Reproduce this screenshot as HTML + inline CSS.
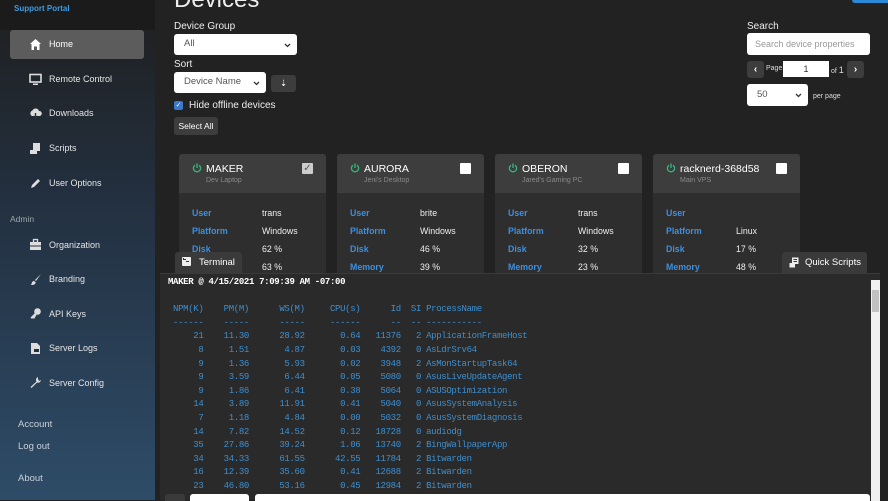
<!DOCTYPE html>
<html><head><meta charset="utf-8">
<style>
*{box-sizing:border-box;margin:0;padding:0}
html,body{width:888px;height:500px;overflow:hidden;background:#222;font-family:"Liberation Sans",sans-serif;color:#fff}
.sb{position:absolute;left:0;top:0;width:155px;height:500px;background:linear-gradient(180deg,#1f1f1f 0%,#233040 40%,#2e4c68 100%)}
.sbh{position:absolute;left:0;top:0;width:155px;height:30px;background:#1b1b1b}
.sbh span{position:absolute;left:14px;top:4px;font-size:8px;color:#3d9ae3;font-weight:bold}
.nav{position:absolute;left:49px;font-size:9px;color:#e6e6e6}
.ico{position:absolute;left:29px;width:13px;height:13px}
.act{position:absolute;left:10px;top:30px;width:134px;height:29px;background:#5c5c5c;border-radius:3px}
.lnk{position:absolute;font-size:9.5px;color:#c8d0d8}
.main{position:absolute;left:155px;top:0;width:733px;height:500px}
.a{position:absolute}
.lbl{font-size:10px;color:#eee}
.sel{background:#fff;border-radius:3px;color:#555;font-size:9.5px;padding-left:10px;line-height:20px}
.chev{position:absolute;right:6px;top:50%;margin-top:-2px;width:7px;height:5px}
.btn{background:#3d3d3d;border-radius:3px;font-size:8.5px;color:#fff;text-align:center}
.card{position:absolute;top:154px;width:147px;height:130px;background:#2e2e2e;border-radius:3px;overflow:hidden}
.ch{height:39px;background:#3d3d3d;position:relative}
.ch .pw{position:absolute;left:13px;top:9px;width:10px;height:10px}
.ch .nm{position:absolute;left:27px;top:9px;font-size:10.5px;color:#fff}
.ch .sub{position:absolute;left:27px;top:23px;font-size:7px;color:#8a8a8a}
.ch .cb{position:absolute;right:13px;top:9px;width:11px;height:11px;background:#fff;border-radius:1px}
.row{position:absolute;left:13px;font-size:8.8px;color:#3d8fe0;font-weight:bold}
.val{position:absolute;left:83px;font-size:8.8px;color:#eee}
.term{position:absolute;left:160px;top:273px;width:720px;height:227px;background:#2a2a2a;border-top:1px solid #3a3a3a}
pre{position:absolute;left:8px;top:2px;font-family:"Liberation Mono",monospace;font-size:9px;letter-spacing:-0.34px;line-height:13.6px;color:#3d8fd0}
pre b{color:#fff}
.tab{position:absolute;background:#3a3a3a;border-radius:3px 3px 0 0;font-size:9.5px;color:#fff}
</style></head><body>
<div class="sb">
 <div class="sbh"><span>Support Portal</span></div>
 <div class="act"></div>
 <svg class="ico" style="top:38px" viewBox="0 0 13 13"><path d="M6.5 1 L12 6 H10.5 V12 H8 V8.5 H5 V12 H2.5 V6 H1Z" fill="#fff"/></svg>
 <div class="nav" style="top:39px;color:#fff">Home</div>
 <svg class="ico" style="top:73px" viewBox="0 0 13 13"><rect x="1" y="1.5" width="11" height="7.5" fill="none" stroke="#ddd" stroke-width="1.6"/><rect x="4" y="10.5" width="5" height="1.5" fill="#ddd"/></svg>
 <div class="nav" style="top:74px">Remote Control</div>
 <svg class="ico" style="top:107px" viewBox="0 0 13 13"><path d="M3 9 A3 3 0 0 1 3.5 3.5 A3.5 3.5 0 0 1 10 4 A2.5 2.5 0 0 1 10.5 9Z" fill="#ddd"/><path d="M6.5 6 V11 M4.5 9 L6.5 11.5 L8.5 9" stroke="#233040" stroke-width="1.4" fill="none"/></svg>
 <div class="nav" style="top:108px">Downloads</div>
 <svg class="ico" style="top:142px" viewBox="0 0 13 13"><path d="M4 1 H11 V9 H4Z M1 8 H8 V12 H1Z" fill="#ddd"/></svg>
 <div class="nav" style="top:143px">Scripts</div>
 <svg class="ico" style="top:177px" viewBox="0 0 13 13"><path d="M2 11 L3 8 L9 2 L11 4 L5 10Z" fill="#ddd"/></svg>
 <div class="nav" style="top:178px">User Options</div>
 <div class="lnk" style="left:10px;top:214px;font-size:8.5px;color:#9aa">Admin</div>
 <svg class="ico" style="top:238px" viewBox="0 0 13 13"><rect x="1" y="4" width="11" height="8" fill="#ddd"/><rect x="4.5" y="1.5" width="4" height="3" fill="none" stroke="#ddd" stroke-width="1.3"/><rect x="1" y="7.5" width="11" height="1" fill="#233040"/></svg>
 <div class="nav" style="top:240px">Organization</div>
 <svg class="ico" style="top:273px" viewBox="0 0 13 13"><path d="M12 1 L6 7 L7 8 Z" fill="#ddd"/><path d="M5 8 C3 8 3 10 2 12 C5 12 7 11 6.5 9Z" fill="#ddd"/></svg>
 <div class="nav" style="top:274px">Branding</div>
 <svg class="ico" style="top:307px" viewBox="0 0 13 13"><circle cx="8.5" cy="4.5" r="3.3" fill="#ddd"/><path d="M6 6 L1.5 10.5 L3 12 L4 11 L5 12 L7.5 8" fill="#ddd"/></svg>
 <div class="nav" style="top:309px">API Keys</div>
 <svg class="ico" style="top:342px" viewBox="0 0 13 13"><path d="M2 1 H8 L11 4 V12 H2Z" fill="#ddd"/><rect x="5" y="7" width="5" height="3" fill="#233040"/></svg>
 <div class="nav" style="top:343px">Server Logs</div>
 <svg class="ico" style="top:376px" viewBox="0 0 13 13"><path d="M9 1 A3 3 0 0 0 7.5 5.5 L1.5 11 L2.5 12 L8 6.5 A3 3 0 0 0 12 4 L10 5 L9 3Z" fill="#ddd"/></svg>
 <div class="nav" style="top:378px">Server Config</div>
 <div class="lnk" style="left:18px;top:419px">Account</div>
 <div class="lnk" style="left:18px;top:441px">Log out</div>
 <div class="lnk" style="left:18px;top:473px">About</div>
</div>

<div class="main">
 <div class="a" style="left:19px;top:-14px;font-size:24px;color:#eee">Devices</div>
 <div class="a" style="left:697px;top:0;width:36px;height:3px;background:#2a8ad8;border-radius:0 0 0 3px"></div>
 <div class="a lbl" style="left:19px;top:21px">Device Group</div>
 <div class="a sel" style="left:19px;top:34px;width:123px;height:21px">All<svg class="chev" viewBox="0 0 7 5"><path d="M1 1 L3.5 3.5 L6 1" stroke="#333" stroke-width="1.3" fill="none"/></svg></div>
 <div class="a lbl" style="left:19px;top:59px">Sort</div>
 <div class="a sel" style="left:19px;top:72px;width:92px;height:21px">Device Name<svg class="chev" viewBox="0 0 7 5"><path d="M1 1 L3.5 3.5 L6 1" stroke="#333" stroke-width="1.3" fill="none"/></svg></div>
 <div class="a btn" style="left:116px;top:75px;width:25px;height:17px;line-height:17px">⇣</div>
 <div class="a" style="left:19px;top:101px;width:9px;height:9px;background:#3a78c8;border-radius:2px;font-size:7px;line-height:9px;text-align:center">✓</div>
 <div class="a lbl" style="left:34px;top:100px">Hide offline devices</div>
 <div class="a btn" style="left:19px;top:117px;width:44px;height:18px;line-height:18px">Select All</div>

 <div class="a lbl" style="left:592px;top:21px">Search</div>
 <div class="a sel" style="left:592px;top:33px;width:123px;height:22px;color:#999;font-size:9px;line-height:22px;padding-left:8px">Search device properties</div>
 <div class="a btn" style="left:592px;top:61px;width:17px;height:17px;line-height:17px;font-size:10px;font-weight:bold">‹</div>
 <div class="a" style="left:611px;top:65px;font-size:7px;color:#ddd">Page</div>
 <div class="a" style="left:628px;top:61px;width:46px;height:16px;background:#fff;color:#333;font-size:9px;text-align:center;line-height:16px">1</div>
 <div class="a" style="left:676px;top:65px;font-size:7px;color:#ddd">of <span style="font-size:9px">1</span></div>
 <div class="a btn" style="left:692px;top:61px;width:17px;height:17px;line-height:17px;font-size:10px;font-weight:bold">›</div>
 <div class="a sel" style="left:592px;top:84px;width:61px;height:22px;line-height:22px">50<svg class="chev" viewBox="0 0 7 5"><path d="M1 1 L3.5 3.5 L6 1" stroke="#333" stroke-width="1.3" fill="none"/></svg></div>
 <div class="a" style="left:658px;top:93px;font-size:7px;color:#ddd">per page</div>
</div>

<div class="card" style="left:179px"><div class="ch"><svg class="pw" viewBox="0 0 10 10"><path d="M3 2.2 A3.6 3.6 0 1 0 7 2.2" fill="none" stroke="#2fb57a" stroke-width="1.4"/><path d="M5 0.5 V5" stroke="#2fb57a" stroke-width="1.4"/></svg><div class="nm">MAKER</div><div class="sub">Dev Laptop</div><div class="cb" style="background:#ccc;color:#555;font-size:10px;line-height:11px;text-align:center">✓</div></div>
<div class="row" style="top:54px">User</div><div class="val" style="top:54px">trans</div>
<div class="row" style="top:72px">Platform</div><div class="val" style="top:72px">Windows</div>
<div class="row" style="top:90px">Disk</div><div class="val" style="top:90px">62 %</div>
<div class="row" style="top:108px">Memory</div><div class="val" style="top:108px">63 %</div></div>

<div class="card" style="left:337px"><div class="ch"><svg class="pw" viewBox="0 0 10 10"><path d="M3 2.2 A3.6 3.6 0 1 0 7 2.2" fill="none" stroke="#2fb57a" stroke-width="1.4"/><path d="M5 0.5 V5" stroke="#2fb57a" stroke-width="1.4"/></svg><div class="nm">AURORA</div><div class="sub">Jeni's Desktop</div><div class="cb"></div></div>
<div class="row" style="top:54px">User</div><div class="val" style="top:54px">brite</div>
<div class="row" style="top:72px">Platform</div><div class="val" style="top:72px">Windows</div>
<div class="row" style="top:90px">Disk</div><div class="val" style="top:90px">46 %</div>
<div class="row" style="top:108px">Memory</div><div class="val" style="top:108px">39 %</div></div>

<div class="card" style="left:495px"><div class="ch"><svg class="pw" viewBox="0 0 10 10"><path d="M3 2.2 A3.6 3.6 0 1 0 7 2.2" fill="none" stroke="#2fb57a" stroke-width="1.4"/><path d="M5 0.5 V5" stroke="#2fb57a" stroke-width="1.4"/></svg><div class="nm">OBERON</div><div class="sub">Jared's Gaming PC</div><div class="cb"></div></div>
<div class="row" style="top:54px">User</div><div class="val" style="top:54px">trans</div>
<div class="row" style="top:72px">Platform</div><div class="val" style="top:72px">Windows</div>
<div class="row" style="top:90px">Disk</div><div class="val" style="top:90px">32 %</div>
<div class="row" style="top:108px">Memory</div><div class="val" style="top:108px">23 %</div></div>

<div class="card" style="left:653px"><div class="ch"><svg class="pw" viewBox="0 0 10 10"><path d="M3 2.2 A3.6 3.6 0 1 0 7 2.2" fill="none" stroke="#2fb57a" stroke-width="1.4"/><path d="M5 0.5 V5" stroke="#2fb57a" stroke-width="1.4"/></svg><div class="nm">racknerd-368d58</div><div class="sub">Main VPS</div><div class="cb"></div></div>
<div class="row" style="top:54px">User</div>
<div class="row" style="top:72px">Platform</div><div class="val" style="top:72px">Linux</div>
<div class="row" style="top:90px">Disk</div><div class="val" style="top:90px">17 %</div>
<div class="row" style="top:108px">Memory</div><div class="val" style="top:108px">48 %</div></div>

<div class="tab" style="left:175px;top:252px;width:67px;height:21px"><span style="position:absolute;left:7px;top:5px;width:9px;height:9px;background:#eee;border-radius:1px"><span style="position:absolute;left:1px;top:1px;width:3px;height:2px;border-left:1px solid #333;border-bottom:1px solid #333"></span><span style="position:absolute;left:4px;top:4px;width:3px;height:1px;background:#333"></span></span><span style="position:absolute;left:24px;top:5px">Terminal</span></div>
<div class="tab" style="left:782px;top:252px;width:85px;height:21px"><svg style="position:absolute;left:7px;top:5px" width="10" height="11" viewBox="0 0 10 11"><path d="M3 0.5 H9.5 V7 H3Z M0.5 6 H6 V10.5 H0.5Z" fill="#eee"/><path d="M4.5 2.5 H8 M4.5 4.5 H8" stroke="#3a3a3a"/></svg><span style="position:absolute;left:23px;top:5px">Quick Scripts</span></div>

<div class="term">
<pre><b>MAKER @ 4/15/2021 7:09:39 AM -07:00</b>

 NPM(K)    PM(M)      WS(M)     CPU(s)      Id  SI ProcessName
 ------    -----      -----     ------      --  -- -----------
     21    11.30      28.92       0.64   11376   2 ApplicationFrameHost
      8     1.51       4.87       0.03    4392   0 AsLdrSrv64
      9     1.36       5.93       0.02    3948   2 AsMonStartupTask64
      9     3.59       6.44       0.05    5080   0 AsusLiveUpdateAgent
      9     1.86       6.41       0.38    5064   0 ASUSOptimization
     14     3.89      11.91       0.41    5040   0 AsusSystemAnalysis
      7     1.18       4.84       0.00    5032   0 AsusSystemDiagnosis
     14     7.82      14.52       0.12   18728   0 audiodg
     35    27.86      39.24       1.06   13740   2 BingWallpaperApp
     34    34.33      61.55      42.55   11784   2 Bitwarden
     16    12.39      35.60       0.41   12688   2 Bitwarden
     23    46.80      53.16       0.45   12984   2 Bitwarden</pre>
 <div class="a" style="left:711px;top:6px;width:9px;height:221px;background:#f0f0f0"><div style="position:absolute;left:1px;top:10px;width:7px;height:22px;background:#c1c1c1"></div></div>
 <div class="a" style="left:5px;top:220px;width:20px;height:7px;background:#3a3a3a;border-radius:3px 3px 0 0"></div>
 <div class="a" style="left:30px;top:220px;width:59px;height:7px;background:#fff;border-radius:3px 3px 0 0"></div>
 <div class="a" style="left:95px;top:220px;width:615px;height:7px;background:#fff;border-radius:3px 3px 0 0"></div>
</div>
</body></html>
